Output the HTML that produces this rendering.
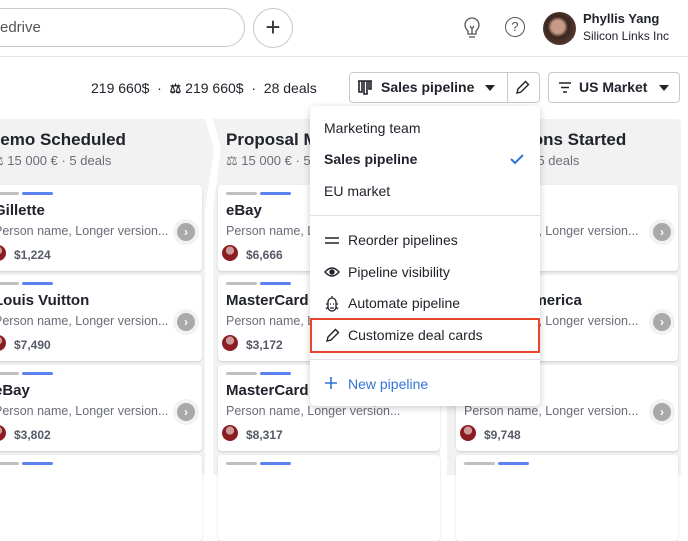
<!DOCTYPE html><html><head><style>
*{box-sizing:border-box;margin:0;padding:0}
body{width:688px;height:475px;overflow:hidden;background:#fff;font-family:"Liberation Sans",sans-serif;color:#21232c;position:relative}
.a{position:absolute}
.card{position:absolute;background:#fff;border-radius:4px;box-shadow:0 1px 2px rgba(0,0,0,.15);height:86px;overflow:hidden}
.bars{position:absolute;top:7px;left:8px;height:3px;display:flex;gap:3px}
.bars i{display:block;height:3px;border-radius:2px}
.t{position:absolute;top:17px;left:8px;font-weight:bold;font-size:15px;white-space:nowrap}
.p{position:absolute;top:39px;left:8px;font-size:12.5px;color:#6a6d78;white-space:nowrap}
.v{position:absolute;top:63px;left:28px;font-size:12px;font-weight:bold;color:#555a66}
.av{position:absolute;top:60px;left:4px;width:16px;height:16px;border-radius:50%;background:radial-gradient(circle at 50% 35%,#c99 0 30%,#8b1c22 32%)}
.go{position:absolute;right:7px;top:38px;width:18px;height:18px;border-radius:50%;background:#a9a9a9;box-shadow:0 0 0 4px #f2f2f2;color:#fff;font-size:12px;text-align:center;line-height:18px;font-weight:bold}
.mi{position:absolute;left:14px;font-size:14px;color:#21232c;white-space:nowrap}
</style></head><body>
<div class="a" style="left:-20px;top:8px;width:265px;height:39px;border:1px solid #c8c9cc;border-radius:20px"></div>
<div class="a" style="left:0;top:19px;font-size:15px;color:#555">edrive</div>
<div class="a" style="left:253px;top:8px;width:40px;height:40px;border:1px solid #c8c9cc;border-radius:50%;text-align:center;line-height:36px;font-size:26px;font-weight:300;color:#333">+</div>
<svg class="a" style="left:462px;top:16px" width="20" height="24" viewBox="0 0 20 24" fill="none" stroke="#555" stroke-width="1.3"><path d="M6 15c-2-2-3-4-3-6a7 7 0 0 1 14 0c0 2-1 4-3 6v3H6z M7 21h6 M8 10l2 3 2-3 M10 13v5"/></svg>
<div class="a" style="left:505px;top:17px;width:20px;height:20px;border:1.3px solid #555;border-radius:50%;text-align:center;font-size:13px;line-height:18px;color:#555">?</div>
<div class="a" style="left:543px;top:12px;width:33px;height:33px;border-radius:50%;background:radial-gradient(circle at 45% 45%,#c79b86 0 25%,#3a2620 40%,#6b4a3c)"></div>
<div class="a" style="left:583px;top:11px;font-size:13px;font-weight:bold">Phyllis Yang</div>
<div class="a" style="left:583px;top:29px;font-size:12px">Silicon Links Inc</div>
<div class="a" style="left:0;top:56px;width:688px;height:1px;background:#e4e4e6"></div>
<div class="a" style="left:91px;top:80px;font-size:14px;color:#21232c;white-space:nowrap">219 660$ &nbsp;·&nbsp; <b style="font-size:13px">⚖</b> 219 660$ &nbsp;·&nbsp; 28 deals</div>
<div class="a" style="left:349px;top:72px;width:191px;height:31px;border:1px solid #c8c9cc;border-radius:4px"></div>
<div class="a" style="left:507px;top:72px;width:1px;height:31px;background:#c8c9cc"></div>
<svg class="a" style="left:357px;top:80px" width="16" height="16" viewBox="0 0 16 16" fill="none" stroke="#21232c" stroke-width="1.6"><path d="M1 1H15 M2 1V12H5V1 M7 1V14H10V1 M12 1V9H14V1"/></svg>
<div class="a" style="left:381px;top:79px;font-size:14px;font-weight:bold">Sales pipeline</div>
<svg class="a" style="left:485px;top:85px" width="10" height="6"><path d="M0 0H10L5 6Z" fill="#21232c"/></svg>
<svg class="a" style="left:515px;top:80px" width="15" height="15" viewBox="0 0 15 15" fill="none" stroke="#21232c" stroke-width="1.4"><path d="M2 13L3 9 10.5 1.5 13.5 4.5 6 12Z"/></svg>
<div class="a" style="left:548px;top:72px;width:132px;height:31px;border:1px solid #c8c9cc;border-radius:4px"></div>
<svg class="a" style="left:558px;top:82px" width="14" height="11" fill="none" stroke="#21232c" stroke-width="1.4"><path d="M1 1H13 M3 5.5H11 M5 10H9"/></svg>
<div class="a" style="left:579px;top:79px;font-size:14px;font-weight:bold">US Market</div>
<svg class="a" style="left:659px;top:85px" width="10" height="6"><path d="M0 0H10L5 6Z" fill="#21232c"/></svg>
<svg class="a" style="left:0;top:119px" width="688" height="356"><path d="M0 0H205L214 30 205 90V356H0Z M213 0H440V356H213V90L221 30Z M447 0H676Q681 0 681 5V356H447Z" fill="#f2f2f2"/></svg>
<div class="a" style="left:0;top:130px;font-size:17px;font-weight:bold;margin-left:-12px">Demo Scheduled</div>
<div class="a" style="left:0;top:153px;font-size:13px;color:#6a6d78;margin-left:-8px">⚖ 15 000 € · 5 deals</div>
<div class="a" style="left:226px;top:130px;font-size:17px;font-weight:bold">Proposal Made</div>
<div class="a" style="left:226px;top:153px;font-size:13px;color:#6a6d78">⚖ 15 000 € · 5 deals</div>
<div class="a" style="left:460px;top:130px;font-size:17px;font-weight:bold">Negotiations Started</div>
<div class="a" style="left:460px;top:153px;font-size:13px;color:#6a6d78">⚖ 15 000 € · 5 deals</div>

<div class="card" style="left:-14px;top:185px;width:216px"><div class="bars"><i style="width:25px;background:#c0c0c0"></i><i style="width:31px;background:#5b82f0"></i></div><div class="t">Gillette</div><div class="p">Person name, Longer version...</div><div class="av"></div><div class="v">$1,224</div><div class="go">›</div></div>
<div class="card" style="left:-14px;top:275px;width:216px"><div class="bars"><i style="width:25px;background:#c0c0c0"></i><i style="width:31px;background:#5b82f0"></i></div><div class="t">Louis Vuitton</div><div class="p">Person name, Longer version...</div><div class="av"></div><div class="v">$7,490</div><div class="go">›</div></div>
<div class="card" style="left:-14px;top:365px;width:216px"><div class="bars"><i style="width:25px;background:#c0c0c0"></i><i style="width:31px;background:#5b82f0"></i></div><div class="t">eBay</div><div class="p">Person name, Longer version...</div><div class="av"></div><div class="v">$3,802</div><div class="go">›</div></div>
<div class="card" style="left:-14px;top:455px;width:216px"><div class="bars"><i style="width:25px;background:#c0c0c0"></i><i style="width:31px;background:#5b82f0"></i></div></div>
<div class="card" style="left:218px;top:185px;width:222px"><div class="bars"><i style="width:31px;background:#c0c0c0"></i><i style="width:31px;background:#5b82f0"></i></div><div class="t">eBay</div><div class="p">Person name, Longer version...</div><div class="av"></div><div class="v">$6,666</div></div>
<div class="card" style="left:218px;top:275px;width:222px"><div class="bars"><i style="width:31px;background:#c0c0c0"></i><i style="width:31px;background:#5b82f0"></i></div><div class="t">MasterCard</div><div class="p">Person name, Longer version...</div><div class="av"></div><div class="v">$3,172</div></div>
<div class="card" style="left:218px;top:365px;width:222px"><div class="bars"><i style="width:31px;background:#c0c0c0"></i><i style="width:31px;background:#5b82f0"></i></div><div class="t">MasterCard</div><div class="p">Person name, Longer version...</div><div class="av"></div><div class="v">$8,317</div></div>
<div class="card" style="left:218px;top:455px;width:222px"><div class="bars"><i style="width:31px;background:#c0c0c0"></i><i style="width:31px;background:#5b82f0"></i></div></div>
<div class="card" style="left:456px;top:185px;width:222px"><div class="bars"><i style="width:31px;background:#c0c0c0"></i><i style="width:31px;background:#5b82f0"></i></div><div class="t">Amazon</div><div class="p">Person name, Longer version...</div><div class="av"></div><div class="v">$2,100</div><div class="go">›</div></div>
<div class="card" style="left:456px;top:275px;width:222px"><div class="bars"><i style="width:31px;background:#c0c0c0"></i><i style="width:31px;background:#5b82f0"></i></div><div class="t">Bank of America</div><div class="p">Person name, Longer version...</div><div class="av"></div><div class="v">$4,500</div><div class="go">›</div></div>
<div class="card" style="left:456px;top:365px;width:222px"><div class="bars"><i style="width:31px;background:#c0c0c0"></i><i style="width:31px;background:#5b82f0"></i></div><div class="t">Mercedes</div><div class="p">Person name, Longer version...</div><div class="av"></div><div class="v">$9,748</div><div class="go">›</div></div>
<div class="card" style="left:456px;top:455px;width:222px"><div class="bars"><i style="width:31px;background:#c0c0c0"></i><i style="width:31px;background:#5b82f0"></i></div></div>

<div class="a" style="left:310px;top:106px;width:230px;height:300px;background:#fff;border-radius:5px;box-shadow:0 2px 8px rgba(0,0,0,.2)">
<div class="mi" style="top:14px">Marketing team</div>
<div class="mi" style="top:45px;font-weight:bold">Sales pipeline</div>
<svg class="a" style="left:200px;top:48px" width="14" height="11" fill="none" stroke="#3173d6" stroke-width="2"><path d="M1 5L5 9 13 1"/></svg>
<div class="mi" style="top:77px">EU market</div>
<div class="a" style="left:0;top:109px;width:230px;height:1px;background:#e2e2e4"></div>
<svg class="a" style="left:15px;top:131px" width="14" height="7" stroke="#21232c" stroke-width="1.6"><path d="M0 1H14 M0 6H14"/></svg>
<div class="mi" style="left:38px;top:126px">Reorder pipelines</div>
<svg class="a" style="left:14px;top:160px" width="16" height="12" viewBox="0 0 16 12" fill="none" stroke="#21232c" stroke-width="1.4"><path d="M1 6Q8 -2 15 6Q8 14 1 6Z"/><circle cx="8" cy="6" r="2" fill="#21232c"/></svg>
<div class="mi" style="left:38px;top:158px">Pipeline visibility</div>
<svg class="a" style="left:14px;top:189px" width="16" height="17" viewBox="0 0 16 17" fill="none" stroke="#21232c" stroke-width="1.3"><path d="M4 7a4 4 0 0 1 8 0v5a4 4 0 0 1-8 0z M2 9H4 M12 9H14 M2 14L4 12 M14 14L12 12 M6 9h1 M9 9h1 M6 13h4 M8 1v2"/></svg>
<div class="mi" style="left:38px;top:189px">Automate pipeline</div>
<svg class="a" style="left:15px;top:222px" width="15" height="15" viewBox="0 0 15 15" fill="none" stroke="#21232c" stroke-width="1.4"><path d="M2 13L3 9 10.5 1.5 13.5 4.5 6 12Z"/></svg>
<div class="mi" style="left:38px;top:221px">Customize deal cards</div>
<div class="a" style="left:0;top:212px;width:230px;height:35px;border:2px solid #e8452c"></div>
<div class="a" style="left:0;top:253px;width:230px;height:1px;background:#e2e2e4"></div>
<svg class="a" style="left:15px;top:271px" width="12" height="12" stroke="#3173d6" stroke-width="1.6"><path d="M6 0V12 M0 6H12"/></svg>
<div class="mi" style="left:38px;top:270px;color:#3173d6">New pipeline</div>
</div>
</body></html>
